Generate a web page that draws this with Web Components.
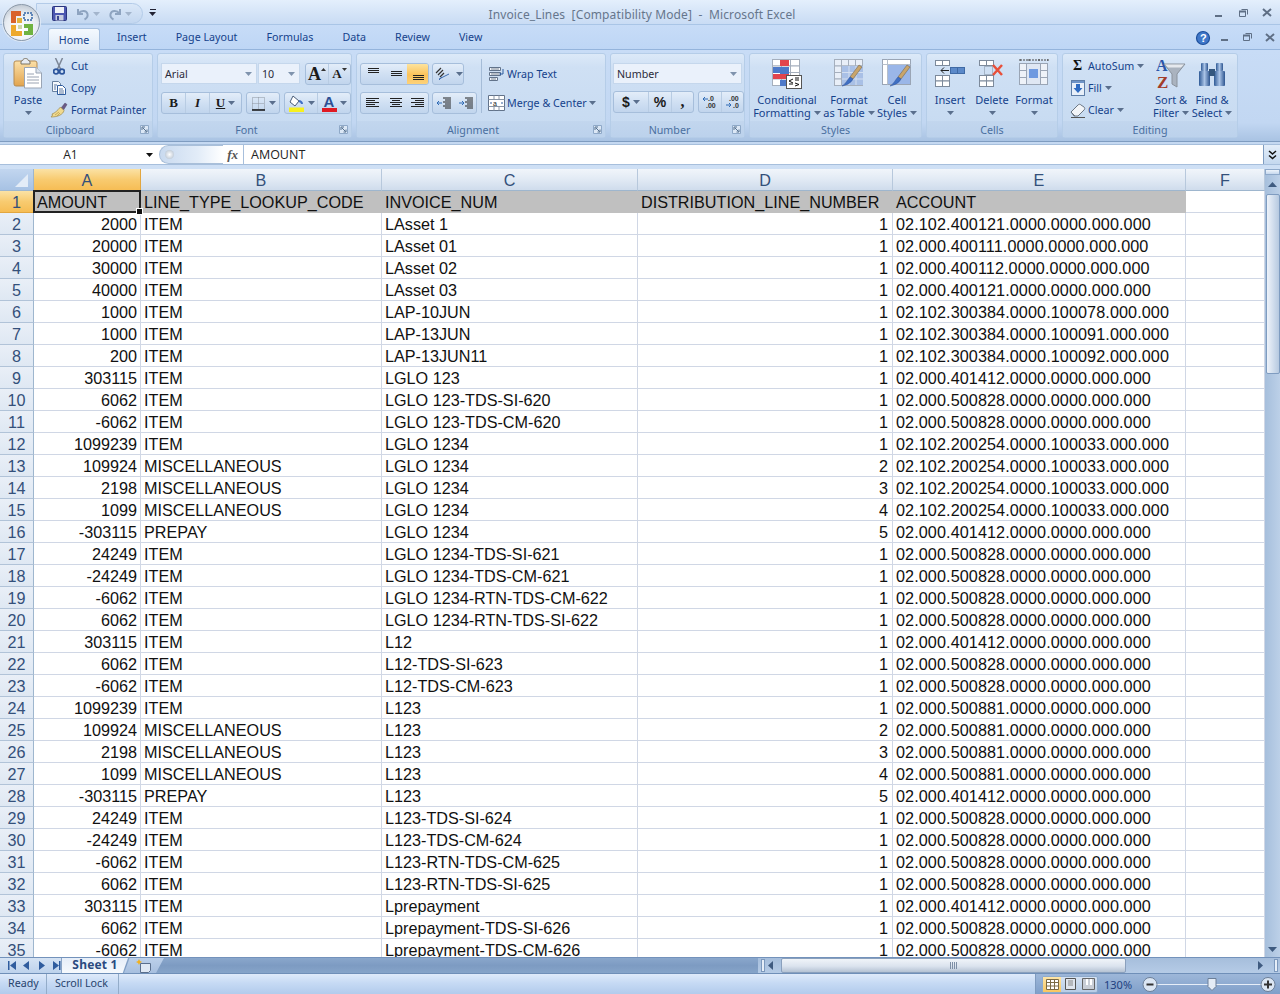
<!DOCTYPE html>
<html>
<head>
<meta charset="utf-8">
<title>Invoice_Lines</title>
<style>
html, body { margin: 0; padding: 0; height: 994px; overflow: hidden; background: #bfd5ee; }
xl-app { font-family: "Noto Sans", "Liberation Sans", sans-serif; }
</style>
</head>
<body>
<xl-app></xl-app>
<script>
const RIB = '#15428b';
const caret = (c = '#5a6f8d') => `<svg width="7" height="4" viewBox="0 0 7 4"><path d="M0 0h7L3.5 4z" fill="${c}"/></svg>`;
const lines = (rows, c = '#222') => `<svg width="16" height="14" viewBox="0 0 16 14">${rows.map(r => `<rect x="${r[0]}" y="${r[1]}" width="${r[2]}" height="1" fill="${c}"/>`).join('')}</svg>`;
const launcher = `<svg width="9" height="9" viewBox="0 0 9 9"><path d="M.5.5h8v8h-8z" fill="#dce8f6" stroke="#8fa9c8"/><path d="M2 2h3M2 2v3M3 3l3.5 3.5M7 4.500v2.500H4.500" fill="none" stroke="#54708f"/></svg>`;

function gridIcon(x, y, cols, rows, w, h, stroke = '#9aa5b5', fill = '#fff') {
    let s = '';
    for (let r = 0; r < rows; r++) for (let c = 0; c < cols; c++) {
        s += `<rect x="${x + c * w + .5}" y="${y + r * h + .5}" width="${w}" height="${h}" fill="${fill}" stroke="${stroke}"/>`;
    }
    return s;
}
const brush = (dx, dy) => `<g transform="translate(${dx} ${dy})"><path d="M20 2l3 2-9 12-3-2z" fill="#c9a56b" stroke="#77684f" stroke-width=".6"/><path d="M11 14l3 2c-2 4-6 6-11 7 4-2 5-6 8-9z" fill="#3f6fc4" stroke="#2a4f96" stroke-width=".5"/></g>`;
const indent = (flip) => `<svg width="16" height="14" viewBox="0 0 16 14"><path d="M7 2h8M9 4h6M7 6h8M9 8h6M7 10h8M9 12h6" stroke="#222"/><path d="${flip ? 'M1 7h5M6 7L4 5M6 7L4 9' : 'M1 7h5M1 7l2-2M1 7l2 2'}" stroke="#2f6bb5" fill="none"/></svg>`;

const icons = {
    paste: `<svg width="30" height="31" viewBox="0 0 30 31"><defs><linearGradient id="pb" x1="0" y1="0" x2="0" y2="1"><stop offset="0" stop-color="#fbe0a8"/><stop offset="1" stop-color="#e2a44e"/></linearGradient></defs><rect x="1" y="3" width="23" height="25" rx="2" fill="url(#pb)" stroke="#b58b53"/><path d="M8 4c0-2 2-1 2-2 0-2 5-2 5 0 0 1 2 0 2 2v2H8z" fill="#e8ecf2" stroke="#7d7463"/><path d="M11.500 9.500H23l5.500 5.500v15H11.500z" fill="#fff" stroke="#9aa5b5"/><path d="M23 9.500V15h5.500" fill="#dde4ee" stroke="#9aa5b5"/><path d="M14 16h7M14 19h12M14 22h12M14 25h12" stroke="#9aa3b2"/></svg>`,
    cut: `<svg width="12" height="17" viewBox="0 0 12 17"><path d="M2.500 0l5 11M9.500 0l-5 11" stroke="#7c8696" stroke-width="1.500" fill="none"/><circle cx="3" cy="13.500" r="2.400" fill="none" stroke="#2c559c" stroke-width="1.800"/><circle cx="9" cy="13.500" r="2.400" fill="none" stroke="#2c559c" stroke-width="1.800"/></svg>`,
    copy: `<svg width="16" height="16" viewBox="0 0 16 16"><path d="M1.500 1.500h6l2 2v8h-8z" fill="#f5f8fc" stroke="#68809f"/><path d="M6.500 5.500h5l3 3v6h-8z" fill="#fff" stroke="#2f5c9e"/><path d="M3 5h3M3 7h2M3 9h2M8 9h4M8 11h5M8 13h5" stroke="#5a79a3"/></svg>`,
    painter: `<svg width="18" height="16" viewBox="0 0 18 16"><path d="M11 6l4-5 2 1.500-3.500 5.500z" fill="#6a5a86" stroke="#4e4468" stroke-width=".5"/><path d="M10.500 5L14 8.500c-1 4-6 6.500-13 6.500 1-1 1-2 2-2-1 0-1-1-1-1 3-1 5-3 8.500-7z" fill="#f0d98e" stroke="#9c8849" stroke-width=".7"/><path d="M5 13l4-3M7 14l3-3" stroke="#b79b45" stroke-width=".7"/></svg>`,
    save: `<svg width="15" height="15" viewBox="0 0 15 15"><rect x=".5" y=".5" width="14" height="14" rx="1" fill="#4b56b0" stroke="#2b357f"/><rect x="3" y="1" width="9" height="6" fill="#eef1f8"/><rect x="3.500" y="9" width="8" height="5.500" fill="#c7cde0"/><rect x="5" y="10" width="2" height="4" fill="#3a4690"/></svg>`,
    undo: `<svg width="14" height="14" viewBox="0 0 14 14"><path d="M2 2v5h5M2.500 6.500C5 3 10.500 3 11.500 7c.5 2.500-1 4.500-3 5.500" fill="none" stroke="#8ea4c0" stroke-width="2"/></svg>`,
    redo: `<svg width="14" height="14" viewBox="0 0 14 14"><path d="M12 2v5H7M11.500 6.500C9 3 3.500 3 2.500 7c-.5 2.500 1 4.500 3 5.500" fill="none" stroke="#8ea4c0" stroke-width="2"/></svg>`,
    borders: `<svg width="15" height="15" viewBox="0 0 15 15"><path d="M1.500 1.500h12v12h-12zM7.500 1.500v12M1.500 7.500h12" fill="none" stroke="#8d949e" stroke-dasharray="1 1"/><path d="M1 14h13" stroke="#111" stroke-width="1.400"/></svg>`,
    fill: `<svg width="17" height="17" viewBox="0 0 17 17"><path d="M5 1l6 5-4 5-5-4z" fill="#fff" stroke="#4b5d78"/><path d="M11 6c2 .5 3 1.500 3 3" stroke="#3f6fc4" stroke-width="2" fill="none"/><rect x="1" y="12.500" width="15" height="4.500" fill="#f7f01e"/></svg>`,
    orient: `<svg width="20" height="15" viewBox="0 0 20 15"><path d="M3 6l5-5M5 8l5-5M7 10l4-4" stroke="#333" stroke-width="1.200"/><path d="M6 12l10-5" stroke="#3c6bb0" stroke-width="1"/><path d="M6 13l3-3" stroke="#3c6bb0"/></svg>`,
    wrap: `<svg width="17" height="16" viewBox="0 0 17 16"><path d="M1.500 1.500h11v3h-11zM1.500 6.500h11v3h-11zM1.500 11.500h8v3h-8z" fill="#f4f7fb" stroke="#62738a"/><path d="M3 3h8M3 8h8M3 13h5" stroke="#7d8795"/><path d="M15 3v5h-3M13 7l-1.500 1 1.500 1" fill="none" stroke="#2f5c9e"/></svg>`,
    merge: `<svg width="17" height="16" viewBox="0 0 17 16"><path d="M.5.500h16v15H.500z" fill="#fff" stroke="#62738a"/><path d="M.5 4.500h16M.5 11.500h16M6 .5v4M11 .5v4M6 11.500v4M11 11.500v4" stroke="#8995a5"/><text x="5" y="10.500" font-family="Liberation Sans" font-size="7" fill="#222">a</text><path d="M2 8h2M13 8h2" stroke="#2f5c9e"/></svg>`,
    incdec: `<svg width="16" height="14" viewBox="0 0 16 14"><text x="6" y="6" font-family="Liberation Sans" font-size="7" font-weight="700" fill="#333">.0</text><text x="4" y="13" font-family="Liberation Sans" font-size="7" font-weight="700" fill="#333">.00</text><path d="M1 4h5M1 4l2-2M1 4l2 2" stroke="#2f6bb5" fill="none"/></svg>`,
    decdec: `<svg width="16" height="14" viewBox="0 0 16 14"><text x="4" y="6" font-family="Liberation Sans" font-size="7" font-weight="700" fill="#333">.00</text><text x="8" y="13" font-family="Liberation Sans" font-size="7" font-weight="700" fill="#333">.0</text><path d="M1 10h5M6 10l-2-2M6 10l-2 2" stroke="#2f6bb5" fill="none"/></svg>`,
    cond: `<svg width="30" height="30" viewBox="0 0 30 30">${gridIcon(0, 0, 3, 4, 9, 6.500, '#a5afbd')}<rect x="8" y="1" width="9" height="6" fill="#e2444c"/><rect x="1" y="8" width="16" height="6" fill="#4d79c9"/><rect x="8" y="14" width="9" height="6" fill="#4d79c9"/><rect x="1" y="15" width="16" height="5" fill="#e2444c"/><rect x="8" y="21" width="9" height="6" fill="#4d79c9"/><rect x="14.500" y="16.500" width="15" height="13" fill="#fff" stroke="#555"/><path d="M17 22l4-2M17 22l4 2M17 25h4M23 19h4M23 21h4M23 24l4 1.500-4 1.500" stroke="#111" fill="none"/></svg>`,
    table: `<svg width="30" height="30" viewBox="0 0 30 30">${gridIcon(0, 0, 4, 4, 7, 6.500, '#a5afbd', '#e9eff8')}<rect x="8" y="7" width="21" height="19" fill="#a9c0e6"/><path d="M15 7v19M22 7v19M8 13.500h21M8 20h21" stroke="#d4dff0"/>${brush(5, 4)}</svg>`,
    cell: `<svg width="30" height="30" viewBox="0 0 30 30"><rect x=".5" y=".5" width="28" height="25" fill="#fff" stroke="#9aa5b5"/><path d="M.5 5.500h28M5.500.5v25" stroke="#b6bfcb"/><rect x="6" y="6" width="22" height="19" fill="#9ab6e8"/>${brush(5, 4)}</svg>`,
    insert: `<svg width="31" height="28" viewBox="0 0 31 28">${gridIcon(0, 0, 2, 1, 7, 5, '#7d8a9b')}${gridIcon(0, 15, 2, 2, 7, 5.500, '#7d8a9b')}<rect x="15.500" y="7.500" width="7" height="6" fill="#5b89c9" stroke="#3f6aa5"/><rect x="22.500" y="7.500" width="7" height="6" fill="#5b89c9" stroke="#3f6aa5"/><path d="M6 10.500h8M6 10.500l3-3M6 10.500l3 3" stroke="#222" fill="none"/></svg>`,
    del: `<svg width="27" height="28" viewBox="0 0 27 28">${gridIcon(0, 0, 2, 1, 7, 5, '#7d8a9b')}${gridIcon(0, 15, 2, 2, 7, 5.500, '#7d8a9b')}<path d="M5.500 6.500h8v8h-8z" fill="none" stroke="#7d8a9b" stroke-dasharray="1 1"/><path d="M14 5l9 10M23 5l-9 10" stroke="#e8503a" stroke-width="2.500"/></svg>`,
    format: `<svg width="30" height="29" viewBox="0 0 30 29"><path d="M1 1h28M1 0v2M29 0v2M10 0v2M20 0v2" stroke="#444" stroke-dasharray="2 1"/>${gridIcon(0, 4, 1, 3, 7, 7, '#9aa5b5', '#eef2f8')}${gridIcon(21, 4, 1, 3, 7, 7, '#9aa5b5', '#eef2f8')}<rect x="7.500" y="4.500" width="14" height="21" fill="#dfe7f3" stroke="#9aa5b5"/><rect x="10" y="10" width="9" height="9" fill="#6f9ae0"/></svg>`,
    fillDown: `<svg width="14" height="16" viewBox="0 0 14 16"><rect x=".5" y=".5" width="13" height="15" fill="#e8eff9" stroke="#5f7ea8"/><rect x="1" y="1" width="12" height="2" fill="#6e93c7"/><path d="M5 4h4v4h2.500L7 13 2.500 8H5z" fill="#2f6bc2"/></svg>`,
    clear: `<svg width="16" height="15" viewBox="0 0 16 15"><path d="M1 9l7-7c1-1 2-1 3 0l3 2c1 1 1 2 0 3l-6 6H4z" fill="#f3f5f8" stroke="#6b7684"/><path d="M1 14.500h14" stroke="#555"/><path d="M1 9l4 4" stroke="#6b7684"/></svg>`,
    sort: `<svg width="30" height="32" viewBox="0 0 30 32"><text x="0" y="13" font-family="Liberation Serif" font-weight="700" font-size="16" fill="#2a55a8">A</text><text x="1" y="30" font-family="Liberation Serif" font-weight="700" font-size="17" fill="#a33c2a">Z</text><path d="M8 6h21l-8 10v13l-5-3V16z" fill="#aab3bf" stroke="#8a929c"/><path d="M9 6.500h19l-3 3H12z" fill="#e6e9ee"/></svg>`,
    find: `<svg width="28" height="27" viewBox="0 0 28 27"><defs><linearGradient id="bn" x1="0" y1="0" x2="1" y2="0"><stop offset="0" stop-color="#2f5a96"/><stop offset=".5" stop-color="#a9c3e6"/><stop offset="1" stop-color="#2d5590"/></linearGradient></defs><rect x="1" y="11" width="11" height="15" rx="1" fill="url(#bn)"/><rect x="16" y="11" width="11" height="15" rx="1" fill="url(#bn)"/><rect x="3" y="3" width="7" height="8" rx="1" fill="url(#bn)"/><rect x="18" y="3" width="7" height="8" rx="1" fill="url(#bn)"/><rect x="11" y="9" width="6" height="7" fill="#34577f"/></svg>`,
    office: `<svg width="30" height="30" viewBox="0 0 30 30"><path d="M4 3h10v5H9v7H4z" fill="#d9622b"/><rect x="17" y="5" width="8" height="7" fill="none" stroke="#5f86b8" stroke-width="2" stroke-dasharray="2 1"/><path d="M4 17h5v6h6v5H4z" fill="#eda92c"/><path d="M17 16h9v11H17v-4h4v-3h-4z" fill="#6fb340"/><rect x="10" y="10" width="5" height="5" fill="#e2b23c"/><rect x="11" y="17" width="4" height="4" fill="#cfd7a8"/></svg>`,
    sheetNew: `<svg width="18" height="14" viewBox="0 0 18 14"><path d="M5.500 4.500h10v7l-2 2h-8z" fill="#dfe8f4" stroke="#5a6f8d"/><path d="M4 0l1 2 2 1-2 1-1 2-1-2-2-1 2-1z" fill="#f2b01e"/></svg>`
};

// plain base class, every element sets its markup in render()
class XlBase extends HTMLElement {
    constructor() {
        super();
        this.attachShadow({ mode: 'open' });
    }
    connectedCallback() {
        if (!this.done) {
            this.done = true;
            this.render();
        }
    }
}

class XlTitlebar extends XlBase {
    render() {
        this.shadowRoot.innerHTML = `
            <style>
                :host { display: flex; height: 25px; box-sizing: border-box; align-items: center; justify-content: center; position: relative;
                    background: linear-gradient(#e4effc, #d3e3f7 60%, #c9dcf4); border-bottom: 1px solid #a9c5e6; }
                .t { font-size: 12px; color: #66768c; white-space: pre; margin-left: 4px; margin-top: 4px; letter-spacing: .12px; }
                .qat { position: absolute; left: 36px; top: 3px; width: 107px; height: 21px; border-radius: 0 11px 11px 0; display: flex; align-items: center;
                    background: linear-gradient(#dbe8f8, #c3d7f0); border: 1px solid #b3cbe8; box-sizing: border-box; padding-left: 15px; gap: 3px; }
                .more { position: absolute; left: 149px; top: 9px; display: flex; flex-direction: column; gap: 2px; align-items: center; }
                .more i { display: block; width: 6px; height: 1px; background: #223; }
                .win { position: absolute; right: 0; top: 0; height: 25px; }
            </style>
            <div class="qat">${icons.save}<span style="width:3px"></span>${icons.undo}${caret('#a3b5cc')}<span style="width:2px"></span>${icons.redo}${caret('#a3b5cc')}</div>
            <div class="more"><i></i>${caret('#223')}</div>
            <div class="t">Invoice_Lines  [Compatibility Mode]  -  Microsoft Excel</div>
            <svg class="win" width="70" height="25" viewBox="0 0 70 25">
                <path d="M5 16h7" stroke="#5f6f85" stroke-width="2"/>
                <path d="M29.500 11.500h6v5h-6zM31.500 9.500h6v5" fill="none" stroke="#5f6f85"/><path d="M29 11.500h7" stroke="#5f6f85" stroke-width="2"/>
                <path d="M53 9l8 7M61 9l-8 7" stroke="#5f6f85" stroke-width="2"/>
            </svg>`;
    }
}

class XlTabs extends XlBase {
    render() {
        const names = ['Home', 'Insert', 'Page Layout', 'Formulas', 'Data', 'Review', 'View'];
        this.shadowRoot.innerHTML = `
            <style>
                :host { display: flex; height: 25px; box-sizing: border-box; padding-left: 48px; gap: 29px; position: relative;
                    background: linear-gradient(#c7dcf7, #bed6f5); font-size: 10.700px; color: ${RIB}; border-bottom: 1px solid #94b4dc; }
                span { line-height: 25px; margin-top: 0; }
                .on { margin: 3px -12px 0 0; height: 22px; width: 52px; box-sizing: border-box; text-align: center; line-height: 22px;
                    background: linear-gradient(#f4f9fe, #dde9f7); border: 1px solid #a6c0e0; border-bottom: 0; border-radius: 3px 3px 0 0; }
                svg { position: absolute; right: 0; top: 0; }
            </style>
            ${names.map((n, i) => `<span class="${i ? '' : 'on'}">${n}</span>`).join('')}
            <svg width="90" height="24" viewBox="0 0 90 24">
                <circle cx="13" cy="13" r="6.500" fill="#3f77c9" stroke="#1d4f9c" stroke-width="1.200"/>
                <text x="10" y="17" font-family="Liberation Sans" font-weight="700" font-size="11" fill="#fff">?</text>
                <path d="M31 15h7" stroke="#5f6f85" stroke-width="2"/>
                <path d="M53.500 10.500h6v5h-6zM55.500 8.500h6v5" fill="none" stroke="#5f6f85"/><path d="M53 10.500h7" stroke="#5f6f85" stroke-width="2"/>
                <path d="M76 9l8 7M84 9l-8 7" stroke="#5f6f85" stroke-width="2"/>
            </svg>`;
    }
}

class XlGroup extends XlBase {
    render() {
        const w = this.getAttribute('width');
        const launch = this.hasAttribute('launcher');
        this.shadowRoot.innerHTML = `
            <style>
                :host { display: flex; flex-direction: column; width: ${w}px; height: 85px; box-sizing: border-box; border: 1px solid #b5cde8; border-radius: 3px;
                    background: linear-gradient(#dce9f8, #cfe0f4 16%, #c6daf1); position: relative; flex: none; }
                .body { flex: 1; display: flex; min-height: 0; }
                .lab { height: 16px; line-height: 19px; overflow: hidden; text-align: center; font-size: 10.700px; color: #4a6f9f; background: linear-gradient(#c2d6ee, #bcd2ec); box-sizing: border-box; padding-right: ${launch ? 16 : 0}px; }
                .l { position: absolute; right: 3px; bottom: 3px; height: 9px; line-height: 0; }
            </style>
            <div class="body"><slot></slot></div>
            <div class="lab">${this.getAttribute('label')}</div>
            ${launch ? `<div class="l">${launcher}</div>` : ''}`;
    }
}

class XlLarge extends XlBase {
    render() {
        const w = this.getAttribute('width');
        const a = this.getAttribute('a');
        const b = this.getAttribute('b');
        const arrow = this.hasAttribute('arrow');
        this.shadowRoot.innerHTML = `
            <style>
                :host { display: flex; flex-direction: column; align-items: center; width: ${w}px; flex: none; font-size: 11px; color: ${RIB}; }
                .i { height: 39px; display: flex; align-items: center; justify-content: center; }
                .x { line-height: 13px; height: 13px; white-space: nowrap; display: flex; align-items: center; gap: 3px; }
            </style>
            <div class="i"><slot></slot></div>
            <div class="x">${a}</div>
            <div class="x">${b || ''}${arrow || b === null ? caret() : ''}</div>`;
    }
}

class XlSmall extends XlBase {
    render() {
        const iw = this.getAttribute('iw') || 18;
        this.shadowRoot.innerHTML = `
            <style>
                :host { display: flex; align-items: center; height: 22px; font-size: 10.700px; color: ${RIB}; white-space: nowrap; gap: 3px; }
                .i { width: ${iw}px; display: flex; justify-content: center; flex: none; }
            </style>
            <div class="i"><slot name="i"></slot></div><slot></slot>`;
    }
}

class XlCombo extends XlBase {
    render() {
        this.shadowRoot.innerHTML = `
            <style>
                :host { display: flex; align-items: center; justify-content: space-between; width: ${this.getAttribute('width')}px; height: 21px; box-sizing: border-box;
                    background: #eaf1fb; border: 1px solid #c5d7ec; padding: 0 4px 0 3px; font-size: 10.700px; color: #2b2b3a; flex: none; }
            </style>
            <span>${this.getAttribute('text')}</span>${caret('#7f93ad')}`;
    }
}

class XlStrip extends XlBase {
    render() {
        this.shadowRoot.innerHTML = `
            <style>
                :host { display: flex; height: 22px; box-sizing: border-box; border: 1px solid #a6bedb; border-radius: 3px; overflow: hidden; flex: none;
                    background: linear-gradient(#e3edf9, #d0e0f3 50%, #c1d5ed); }
            </style>
            <slot></slot>`;
    }
}

class XlTb extends XlBase {
    render() {
        const w = this.getAttribute('width');
        const on = this.hasAttribute('on');
        this.shadowRoot.innerHTML = `
            <style>
                :host { display: flex; align-items: center; justify-content: center; gap: 3px; width: ${w}px; height: 20px; flex: none; color: #1b1b1b; font: 700 13px "Liberation Serif", serif;
                    ${on ? 'background: linear-gradient(#fde39d, #fbc25a 55%, #fdd27a);' : ''} }
            </style>
            <slot></slot>`;
    }
}

class XlRibbon extends XlBase {
    render() {
        const L = (a) => lines(a);
        this.shadowRoot.innerHTML = `
            <style>
                :host { display: flex; height: 92px; box-sizing: border-box; padding: 3px 0 0 3px; gap: 4px;
                    background: linear-gradient(#c8dcf6, #c2d7f2 80%, #a9c3e3); border-bottom: 1px solid #7f9cc0; }
                .col { display: flex; flex-direction: column; }
                .row { display: flex; gap: 4px; }
                .rows { display: flex; flex-direction: column; gap: 7px; padding-top: 9px; }
                svg { display: block; }
                .sep { width: 1px; height: 54px; background: #a5bcd7; margin: 5px 6px 0 4px; flex: none; }
                .btn { display: flex; align-items: center; gap: 3px; height: 22px; font-size: 10.700px; color: ${RIB}; white-space: nowrap; }
                u { text-underline-offset: 1px; }
            </style>

            <xl-group width="150" label="Clipboard" launcher>
                <xl-large width="46" a="Paste" style="margin-left:1px;">${icons.paste}</xl-large>
                <div class="col" style="margin-left:-1px;padding-top:1px;">
                    <xl-small><span slot="i">${icons.cut}</span>Cut</xl-small>
                    <xl-small><span slot="i">${icons.copy}</span>Copy</xl-small>
                    <xl-small><span slot="i">${icons.painter}</span>Format Painter</xl-small>
                </div>
            </xl-group>

            <xl-group width="195" label="Font" launcher>
                <div class="rows" style="padding-left:3px;width:188px;">
                    <div class="row" style="gap:1px;">
                        <xl-combo width="96" text="Arial"></xl-combo>
                        <xl-combo width="42" text="10"></xl-combo>
                        <xl-strip style="margin-left:4px;">
                            <xl-tb width="22" style="font-size:18px;">A<svg width="5" height="3" style="margin:-9px 0 0 -3px"><path d="M0 3l2.500-3L5 3z" fill="#333"/></svg></xl-tb>
                            <xl-tb width="21" style="font-size:13px;border-left:1px solid #b8cce3;">A<svg width="5" height="3" style="margin:-9px 0 0 -3px"><path d="M0 0l2.500 3L5 0z" fill="#333"/></svg></xl-tb>
                        </xl-strip>
                    </div>
                    <div class="row">
                        <xl-strip>
                            <xl-tb width="23">B</xl-tb>
                            <xl-tb width="23" style="font-style:italic;border-left:1px solid #b8cce3;">I</xl-tb>
                            <xl-tb width="31" style="border-left:1px solid #b8cce3;"><u>U</u>${caret()}</xl-tb>
                        </xl-strip>
                        <xl-strip><xl-tb width="32">${icons.borders}${caret()}</xl-tb></xl-strip>
                        <xl-strip>
                            <xl-tb width="32">${icons.fill}${caret()}</xl-tb>
                            <xl-tb width="32" style="border-left:1px solid #b8cce3;flex-direction:row;"><span style="display:flex;flex-direction:column;align-items:center;font:700 15px/13px 'Liberation Sans';color:#2d4f93;">A<i style="display:block;width:15px;height:4px;background:#e01a23;"></i></span>${caret()}</xl-tb>
                        </xl-strip>
                    </div>
                </div>
            </xl-group>

            <xl-group width="250" label="Alignment" launcher>
                <div class="rows" style="padding-left:3px;flex:none;">
                    <div class="row" style="gap:3px;">
                        <xl-strip>
                            <xl-tb width="23">${L([[3, 1, 11], [3, 3, 11], [3, 5, 11]])}</xl-tb>
                            <xl-tb width="23">${L([[3, 4, 11], [3, 6, 11], [3, 8, 11]])}</xl-tb>
                            <xl-tb width="21" on>${L([[3, 8, 11], [3, 10, 11], [3, 12, 11]])}</xl-tb>
                        </xl-strip>
                        <xl-strip><xl-tb width="30">${icons.orient}${caret()}</xl-tb></xl-strip>
                    </div>
                    <div class="row" style="gap:3px;">
                        <xl-strip>
                            <xl-tb width="23">${L([[1, 2, 13], [1, 4, 9], [1, 6, 13], [1, 8, 9], [1, 10, 13]])}</xl-tb>
                            <xl-tb width="23">${L([[2, 2, 12], [4, 4, 8], [2, 6, 12], [4, 8, 8], [2, 10, 12]])}</xl-tb>
                            <xl-tb width="21">${L([[1, 2, 13], [5, 4, 9], [1, 6, 13], [5, 8, 9], [1, 10, 13]])}</xl-tb>
                        </xl-strip>
                        <xl-strip>
                            <xl-tb width="22">${indent(false)}</xl-tb>
                            <xl-tb width="21">${indent(true)}</xl-tb>
                        </xl-strip>
                    </div>
                </div>
                <div class="sep"></div>
                <div class="col" style="padding-top:9px;gap:7px;">
                    <div class="btn" style="gap:2px;">${icons.wrap}Wrap Text</div>
                    <div class="btn" style="gap:2px;">${icons.merge}Merge &amp; Center ${caret()}</div>
                </div>
            </xl-group>

            <xl-group width="135" label="Number" launcher>
                <div class="rows" style="padding-left:2px;">
                    <xl-combo width="129" text="Number"></xl-combo>
                    <div class="row">
                        <xl-strip>
                            <xl-tb width="34" style="font:700 14px 'Liberation Sans';">$${caret()}</xl-tb>
                            <xl-tb width="22" style="font:700 14px 'Liberation Sans';border-left:1px solid #b8cce3;">%</xl-tb>
                            <xl-tb width="21" style="font:700 16px 'Liberation Serif';border-left:1px solid #b8cce3;">,</xl-tb>
                        </xl-strip>
                        <xl-strip>
                            <xl-tb width="22">${icons.incdec}</xl-tb>
                            <xl-tb width="21" style="border-left:1px solid #b8cce3;">${icons.decdec}</xl-tb>
                        </xl-strip>
                    </div>
                </div>
            </xl-group>

            <xl-group width="173" label="Styles">
                <xl-large width="72" a="Conditional" b="Formatting" arrow style="margin-left:1px;">${icons.cond}</xl-large>
                <xl-large width="52" a="Format" b="as Table" arrow>${icons.table}</xl-large>
                <xl-large width="44" a="Cell" b="Styles" arrow>${icons.cell}</xl-large>
            </xl-group>

            <xl-group width="132" label="Cells">
                <xl-large width="44" a="Insert" style="margin-left:1px;">${icons.insert}</xl-large>
                <xl-large width="40" a="Delete">${icons.del}</xl-large>
                <xl-large width="44" a="Format">${icons.format}</xl-large>
            </xl-group>

            <xl-group width="176" label="Editing">
                <div class="col" style="margin-left:7px;padding-top:1px;width:83px;flex:none;">
                    <xl-small iw="15"><span slot="i" style="font:700 14px 'Liberation Serif';color:#111;">Σ</span>AutoSum ${caret()}</xl-small>
                    <xl-small iw="15"><span slot="i">${icons.fillDown}</span>Fill ${caret()}</xl-small>
                    <xl-small iw="15"><span slot="i">${icons.clear}</span>Clear ${caret()}</xl-small>
                </div>
                <xl-large width="36" a="Sort &amp;" b="Filter" arrow>${icons.sort}</xl-large>
                <xl-large width="46" a="Find &amp;" b="Select" arrow>${icons.find}</xl-large>
            </xl-group>`;
    }
}

class XlFormula extends XlBase {
    render() {
        this.shadowRoot.innerHTML = `
            <style>
                :host { display: flex; height: 27px; box-sizing: border-box; padding-top: 2px; background: linear-gradient(#c4d8f1, #cfe0f5); font-family: "Open Sans", "Liberation Sans", sans-serif; }
                .wrap { display: flex; height: 19px; padding-top: 0; flex: 1; align-items: stretch; border-top: 1px solid #a7bfdc; border-bottom: 1px solid #a7bfdc; background: #fff; }
                .name { width: 157px; flex: none; position: relative; line-height: 19px; font-size: 12px; color: #222; text-align: center; box-sizing: border-box; padding-right: 16px; }
                .name svg { position: absolute; right: 4px; top: 8px; }
                .fx { width: 87px; flex: none; box-sizing: border-box; position: relative; border-right: 1px solid #a7bfdc; display: flex; align-items: center; justify-content: flex-end; padding-right: 5px;
                    font: italic 700 13px "Liberation Serif", serif; color: #555; }
                .pill { position: absolute; left: 2px; top: 0; width: 64px; height: 19px; border-radius: 10px 0 0 10px; border: 1px solid #a9bfd9; border-right: 0; box-sizing: border-box;
                    background: linear-gradient(90deg, #c9daef, #e2ecf8 60%, #fff); }
                .pill i { position: absolute; left: 5px; top: 4px; width: 9px; height: 9px; border-radius: 50%; background: radial-gradient(#fff, #aab8c8); }
                .text { flex: 1; line-height: 19px; padding-left: 7px; font-size: 12.500px; color: #222; }
                .exp { width: 16px; flex: none; background: linear-gradient(#e4eef9, #c4d8ef); border-left: 1px solid #7f9cc0; display: flex; align-items: center; justify-content: center; }
            </style>
            <div class="wrap">
                <div class="name">A1${caret('#111')}</div>
                <div class="fx"><div class="pill"><i></i></div>fx</div>
                <div class="text">AMOUNT</div>
                <div class="exp"><svg width="9" height="10" viewBox="0 0 9 10"><path d="M1 1l3.500 3L8 1M1 5.500l3.500 3 3.500-3" fill="none" stroke="#111" stroke-width="1.500"/></svg></div>
            </div>`;
    }
}

const ROWS = [
    ['AMOUNT', 'LINE_TYPE_LOOKUP_CODE', 'INVOICE_NUM', 'DISTRIBUTION_LINE_NUMBER', 'ACCOUNT'],
    [2000, 'ITEM', 'LAsset 1', 1, '02.102.400121.0000.0000.000.000'],
    [20000, 'ITEM', 'LAsset 01', 1, '02.000.400111.0000.0000.000.000'],
    [30000, 'ITEM', 'LAsset 02', 1, '02.000.400112.0000.0000.000.000'],
    [40000, 'ITEM', 'LAsset 03', 1, '02.000.400121.0000.0000.000.000'],
    [1000, 'ITEM', 'LAP-10JUN', 1, '02.102.300384.0000.100078.000.000'],
    [1000, 'ITEM', 'LAP-13JUN', 1, '02.102.300384.0000.100091.000.000'],
    [200, 'ITEM', 'LAP-13JUN11', 1, '02.102.300384.0000.100092.000.000'],
    [303115, 'ITEM', 'LGLO 123', 1, '02.000.401412.0000.0000.000.000'],
    [6062, 'ITEM', 'LGLO 123-TDS-SI-620', 1, '02.000.500828.0000.0000.000.000'],
    [-6062, 'ITEM', 'LGLO 123-TDS-CM-620', 1, '02.000.500828.0000.0000.000.000'],
    [1099239, 'ITEM', 'LGLO 1234', 1, '02.102.200254.0000.100033.000.000'],
    [109924, 'MISCELLANEOUS', 'LGLO 1234', 2, '02.102.200254.0000.100033.000.000'],
    [2198, 'MISCELLANEOUS', 'LGLO 1234', 3, '02.102.200254.0000.100033.000.000'],
    [1099, 'MISCELLANEOUS', 'LGLO 1234', 4, '02.102.200254.0000.100033.000.000'],
    [-303115, 'PREPAY', 'LGLO 1234', 5, '02.000.401412.0000.0000.000.000'],
    [24249, 'ITEM', 'LGLO 1234-TDS-SI-621', 1, '02.000.500828.0000.0000.000.000'],
    [-24249, 'ITEM', 'LGLO 1234-TDS-CM-621', 1, '02.000.500828.0000.0000.000.000'],
    [-6062, 'ITEM', 'LGLO 1234-RTN-TDS-CM-622', 1, '02.000.500828.0000.0000.000.000'],
    [6062, 'ITEM', 'LGLO 1234-RTN-TDS-SI-622', 1, '02.000.500828.0000.0000.000.000'],
    [303115, 'ITEM', 'L12', 1, '02.000.401412.0000.0000.000.000'],
    [6062, 'ITEM', 'L12-TDS-SI-623', 1, '02.000.500828.0000.0000.000.000'],
    [-6062, 'ITEM', 'L12-TDS-CM-623', 1, '02.000.500828.0000.0000.000.000'],
    [1099239, 'ITEM', 'L123', 1, '02.000.500881.0000.0000.000.000'],
    [109924, 'MISCELLANEOUS', 'L123', 2, '02.000.500881.0000.0000.000.000'],
    [2198, 'MISCELLANEOUS', 'L123', 3, '02.000.500881.0000.0000.000.000'],
    [1099, 'MISCELLANEOUS', 'L123', 4, '02.000.500881.0000.0000.000.000'],
    [-303115, 'PREPAY', 'L123', 5, '02.000.401412.0000.0000.000.000'],
    [24249, 'ITEM', 'L123-TDS-SI-624', 1, '02.000.500828.0000.0000.000.000'],
    [-24249, 'ITEM', 'L123-TDS-CM-624', 1, '02.000.500828.0000.0000.000.000'],
    [-6062, 'ITEM', 'L123-RTN-TDS-CM-625', 1, '02.000.500828.0000.0000.000.000'],
    [6062, 'ITEM', 'L123-RTN-TDS-SI-625', 1, '02.000.500828.0000.0000.000.000'],
    [303115, 'ITEM', 'Lprepayment', 1, '02.000.401412.0000.0000.000.000'],
    [6062, 'ITEM', 'Lprepayment-TDS-SI-626', 1, '02.000.500828.0000.0000.000.000'],
    [-6062, 'ITEM', 'Lprepayment-TDS-CM-626', 1, '02.000.500828.0000.0000.000.000']
];

class XlSheet extends XlBase {
    render() {
        let cells = `<div class="corner"><svg width="33" height="21" viewBox="0 0 33 21"><path d="M28 5v13H15z" fill="#e3ecf7"/></svg></div>`;
        ['A', 'B', 'C', 'D', 'E', 'F'].forEach((c, i) => {
            cells += `<div class="ch${i ? '' : ' sel'}">${c}</div>`;
        });
        ROWS.forEach((row, r) => {
            cells += `<div class="rh${r ? '' : ' sel'}">${r + 1}</div>`;
            row.forEach((v, i) => {
                let cls = 'c';
                if (!r) cls += ' head';
                if (typeof v === 'number') cls += i === 3 ? ' num d' : ' num';
                if (i === 4 && r) cls += ' acct';
                cells += `<div class="${cls}">${v}</div>`;
            });
            cells += `<div class="c"></div>`;
        });
        this.shadowRoot.innerHTML = `
            <style>
                :host { display: flex; height: 788px; overflow: hidden; background: #fff; }
                .grid { display: grid; grid-template-columns: 34px 107px 241px 256px 255px 293px 79px; grid-auto-rows: 22px; flex: none; position: relative; width: 1265px;
                    font: 16.200px "Liberation Sans", Arial, sans-serif; color: #111; align-content: start; }
                .c { border-right: 1px solid #d0d7e5; border-bottom: 1px solid #d0d7e5; box-sizing: border-box; padding: 0 3px; line-height: 22px; white-space: nowrap; overflow: hidden; }
                .num { text-align: right; }
                .d { padding-right: 4px; }
                .acct { letter-spacing: .09px; }
                .head { background: #c0c0c0; border-color: #c0c0c0; }
                .ch, .rh, .corner { box-sizing: border-box; border-right: 1px solid #9eb6ce; border-bottom: 1px solid #9eb6ce; color: #34507a; text-align: center; line-height: 22px; font-size: 16.200px; }
                .ch { background: linear-gradient(#f1f5fa, #e3ebf5 45%, #cfdcec); border-right-color: #b7c8dc; }
                .rh { background: linear-gradient(#e9eff7, #dfe8f3); border-bottom-color: #b1c3d8; }
                .corner { background: linear-gradient(#c2d6ef, #a7c2e4); position: relative; }
                .corner svg { display: block; }
                .sel { background: linear-gradient(#fbe2a5, #f8cb70 50%, #f6bd55); border-color: #e2a63f; }
                .cursor { position: absolute; left: 33px; top: 21px; width: 108px; height: 23px; border: 2px solid #222; box-sizing: border-box; pointer-events: none; }
                .cursor i { position: absolute; right: -4px; bottom: -4px; width: 5px; height: 5px; background: #111; border: 1px solid #fff; }
                .vs { width: 15px; flex: none; display: flex; flex-direction: column; background: linear-gradient(90deg, #a6bfdc, #bcd0e8); box-sizing: border-box; }
                .split { height: 6px; background: linear-gradient(#eef4fb, #c6d8ee); border: 1px solid #8ea9ca; box-sizing: border-box; margin-bottom: 1px; }
                .arr { height: 16px; flex: none; display: flex; align-items: center; justify-content: center; }
                .thumb { height: 180px; margin: 2px 0 0 1px; flex: none; border: 1px solid #7f9cc0; border-radius: 2px; box-sizing: border-box; background: linear-gradient(90deg, #eef3fa, #ccdaeb 60%, #b6c9e0); }
                .fill { flex: 1; }
            </style>
            <div class="grid">${cells}<div class="cursor"><i></i></div></div>
            <div class="vs">
                <div class="split"></div>
                <div class="arr"><svg width="9" height="5" viewBox="0 0 9 5"><path d="M0 5l4.500-5L9 5z" fill="#3f5b80"/></svg></div>
                <div class="thumb"></div>
                <div class="fill"></div>
                <div class="arr"><svg width="9" height="5" viewBox="0 0 9 5"><path d="M0 0l4.500 5L9 0z" fill="#3f5b80"/></svg></div>
            </div>`;
    }
}

class XlSheettabs extends XlBase {
    render() {
        const nav = `<svg width="56" height="9" viewBox="0 0 56 9" fill="#2f5c9e"><path d="M3 0h1.500v9H3zM11 0v9L5 4.500zM24 0v9l-6-4.500zM34 0v9l6-4.500zM48 0v9l6-4.500zM54 0h1.500v9H54z"/></svg>`;
        this.shadowRoot.innerHTML = `
            <style>
                :host { display: flex; height: 16px; align-items: stretch; background: linear-gradient(#8aa7cc, #7d9bc2 50%, #86a4c9); border-top: 1px solid #7392bb; box-sizing: border-box; }
                .nav { width: 62px; flex: none; background: linear-gradient(#d5e3f4, #bdd2ec); display: flex; align-items: center; border-right: 1px solid #8aa5c7; box-sizing: border-box; padding-left: 5px; }
                .tab { width: 66px; flex: none; box-sizing: border-box; background: linear-gradient(#e6eef9, #f6f9fd); text-align: center; font: 700 12px/14px "Noto Sans", "Liberation Sans", sans-serif; color: #2a4a80; clip-path: polygon(0 0, 100% 0, 92% 100%, 0 100%); letter-spacing: .2px; }
                .new { width: 40px; flex: none; margin-left: -4px; background: linear-gradient(#bcd0ea, #a7bfdf); clip-path: polygon(14% 0, 100% 0, 80% 100%, 0 100%); display: flex; align-items: center; padding-left: 11px; box-sizing: border-box; }
                .gap { width: 594px; flex: none; }
                .hs { flex: 1; display: flex; align-items: center; background: linear-gradient(#a6bedc, #b5cbe6); }
                .grip { width: 4px; height: 13px; background: #e6eef8; border: 1px solid #7d99bd; box-sizing: border-box; flex: none; margin-left: 3px; }
                .thumb { width: 345px; height: 15px; margin-left: 8px; flex: none; border: 1px solid #8aa0bd; box-sizing: border-box; border-radius: 2px; background: linear-gradient(#f0f4f9, #dbe3ee 55%, #b5c2d3); display: flex; align-items: center; justify-content: center; }
                .thumb i { display: block; width: 8px; height: 7px; background: repeating-linear-gradient(90deg, #7d8ea5 0 1px, transparent 1px 2px); }
            </style>
            <div class="nav">${nav}</div>
            <div class="tab">Sheet 1</div>
            <div class="new">${icons.sheetNew}</div>
            <div class="gap"></div>
            <div class="hs">
                <div class="grip"></div>
                <svg width="5" height="9" viewBox="0 0 5 9" style="margin-left:3px"><path d="M5 0v9L0 4.500z" fill="#3f5b80"/></svg>
                <div class="thumb"><i></i></div>
                <div style="flex:1"></div>
                <svg width="5" height="9" viewBox="0 0 5 9" style="margin-right:11px"><path d="M0 0v9l5-4.500z" fill="#3f5b80"/></svg>
                <div class="grip" style="margin:0 2px 0 0"></div>
            </div>`;
    }
}

class XlStatus extends XlBase {
    render() {
        this.shadowRoot.innerHTML = `
            <style>
                :host { display: flex; height: 21px; box-sizing: border-box; font-size: 10.700px; color: #27436d; border-top: 1px solid #6f8fb8; background: linear-gradient(#dfeafa, #c6daf4 45%, #b2cbec); }
                .s { line-height: 18px; padding: 0 8px; border-right: 1px solid #93acc9; white-space: nowrap; box-sizing: border-box; }
                .right { margin-left: auto; width: 245px; box-sizing: border-box; display: flex; align-items: center; padding-left: 6px; background: linear-gradient(#9db7d9, #7f9fc9); border-left: 1px solid #7f9bbf; }
                .views { display: flex; height: 17px; border: 1px solid #8eaacb; border-radius: 2px; box-sizing: border-box; background: linear-gradient(#d4e2f3, #b7cce6); }
                .views span { width: 18px; display: flex; align-items: center; justify-content: center; }
                .views .on { background: linear-gradient(#fde5a8, #f8c660); }
                .zoom { color: #1e3f7f; margin-left: 6px; width: 38px; font-size: 11px; }
                .slider { flex: 1; height: 19px; }
            </style>
            <div class="s" style="width:47px;">Ready</div>
            <div class="s" style="width:72px;">Scroll Lock</div>
            <div class="right">
                <div class="views">
                    <span class="on"><svg width="13" height="11" viewBox="0 0 13 11"><path d="M.5.500h12v10H.500zM.5 3.500h12M.5 7h12M4.500.5v10M8.500.5v10" fill="#fff" stroke="#7a6a45"/></svg></span>
                    <span><svg width="11" height="12" viewBox="0 0 11 12"><path d="M.5.500h10v11H.500z" fill="#dfe5ee" stroke="#555"/><path d="M3 3h5M3 5h5M3 7h5" stroke="#888"/></svg></span>
                    <span><svg width="13" height="12" viewBox="0 0 13 12"><path d="M.5.500h12v11H.500z" fill="#c9ced6" stroke="#666"/><path d="M4 1h2v6H4zM8 1h2v6H8z" fill="#fff"/></svg></span>
                </div>
                <div class="zoom">130%</div>
                <div class="slider">
                    <svg width="134" height="19" viewBox="0 0 134 19" style="display:block">
                        <path d="M14 9.500h107" stroke="#e6eef8"/>
                        <circle cx="8" cy="9.500" r="7" fill="#dbe6f3" stroke="#6c7f98"/><path d="M4.500 9.500h7" stroke="#333" stroke-width="2"/>
                        <path d="M66 3.500h8v8l-4 4-4-4z" fill="#e4ecf6" stroke="#6c7f98"/>
                        <circle cx="126" cy="9.500" r="7" fill="#dbe6f3" stroke="#6c7f98"/><path d="M122 9.500h8M126 5.500v8" stroke="#333" stroke-width="2"/>
                    </svg>
                </div>
            </div>`;
    }
}

class XlApp extends XlBase {
    render() {
        this.shadowRoot.innerHTML = `
            <style>
                :host { display: block; width: 1280px; height: 994px; position: relative; overflow: hidden; }
                .orb { position: absolute; left: 3px; top: 4px; width: 37px; height: 37px; border-radius: 50%; box-sizing: border-box; border: 1px solid #8a98a8;
                    background: radial-gradient(circle at 50% 70%, #ffffff, #e7ecf2 55%, #a9b3bf); display: flex; align-items: center; justify-content: center;
                    box-shadow: 0 0 0 1px #dfe9f6; }
                .orb svg { display: block; }
            </style>
            <xl-titlebar></xl-titlebar>
            <xl-tabs></xl-tabs>
            <xl-ribbon></xl-ribbon>
            <xl-formula></xl-formula>
            <xl-sheet></xl-sheet>
            <xl-sheettabs></xl-sheettabs>
            <xl-status></xl-status>
            <div class="orb">${icons.office}</div>`;
    }
}

customElements.define('xl-group', XlGroup);
customElements.define('xl-large', XlLarge);
customElements.define('xl-small', XlSmall);
customElements.define('xl-combo', XlCombo);
customElements.define('xl-strip', XlStrip);
customElements.define('xl-tb', XlTb);
customElements.define('xl-titlebar', XlTitlebar);
customElements.define('xl-tabs', XlTabs);
customElements.define('xl-ribbon', XlRibbon);
customElements.define('xl-formula', XlFormula);
customElements.define('xl-sheet', XlSheet);
customElements.define('xl-sheettabs', XlSheettabs);
customElements.define('xl-status', XlStatus);
customElements.define('xl-app', XlApp);
</script>
</body>
</html>
